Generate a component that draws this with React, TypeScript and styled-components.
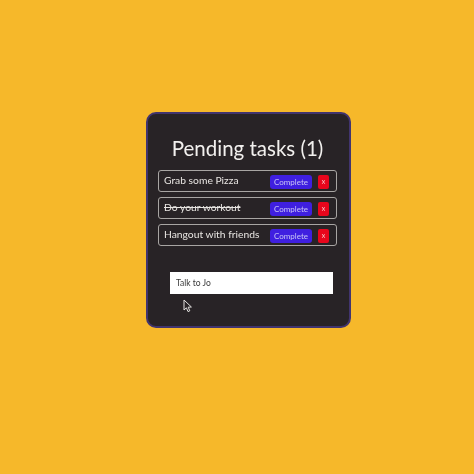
import React from 'react';
import styled, { createGlobalStyle } from 'styled-components';

const GlobalStyle = createGlobalStyle`
  html, body {
    margin: 0;
    height: 100%;
  }
  body {
    background: #f6b82a;
    font-family: "Open Sans", "Noto Sans", sans-serif;
  }
`;

const Page = styled.div`
  width: 474px;
  height: 474px;
  display: flex;
  align-items: flex-start;
  padding: 112px 0 0 146px;
  box-sizing: border-box;
`;

const Card = styled.div`
  position: relative;
  width: 205px;
  height: 216px;
  box-sizing: border-box;
  padding: 21px 12px 0 10px;
  background: #282326;
  border: 2px solid #41346e;
  border-radius: 10px;
  filter: blur(0.5px);
`;

const Title = styled.h1`
  margin: 0 0 9px 0;
  font-family: "Lato", sans-serif;
  font-size: 20.5px;
  line-height: 26px;
  font-weight: 400;
  color: #f2f0ee;
  text-align: center;
`;

const List = styled.div`
  display: flex;
  flex-direction: column;
  gap: 5px;
`;

const Row = styled.div`
  display: flex;
  align-items: center;
  height: 22px;
  box-sizing: border-box;
  padding: 0 7px 0 5px;
  border: 1px solid #a8a5a3;
  border-radius: 3px;
`;

const Label = styled.span<{ $done?: boolean }>`
  flex: 1;
  padding-bottom: 2px;
  font-family: "Lato", sans-serif;
  font-size: 10.3px;
  color: #e8e5e2;
  white-space: nowrap;
  text-decoration: ${(p) => (p.$done ? 'line-through' : 'none')};
`;

const CompleteButton = styled.button`
  width: 42px;
  height: 14px;
  padding: 0;
  margin: 1px 6px 0 0;
  border: 0;
  border-radius: 3px;
  background: #3f1fe0;
  color: #c9c6f5;
  font-family: "Lato", sans-serif;
  font-size: 8px;
  line-height: 14px;
`;

const RemoveButton = styled.button`
  width: 11px;
  height: 14px;
  padding: 0;
  margin-top: 1px;
  border: 0;
  border-radius: 2px;
  background: #e8061c;
  color: #f6c8c8;
  font-family: "Lato", sans-serif;
  font-size: 7px;
  line-height: 13px;
`;

const TaskInput = styled.input`
  display: block;
  width: 163px;
  height: 22px;
  box-sizing: border-box;
  margin: 26px 0 0 12px;
  padding: 0 6px;
  border: 0;
  border-radius: 0;
  background: #ffffff;
  color: #3a3a3a;
  font-family: "Lato", sans-serif;
  font-size: 8.5px;
  outline: none;
`;

const Pointer = styled.svg`
  position: absolute;
  left: 35px;
  top: 185px;
`;

const tasks = [
  { name: 'Grab some Pizza', done: false },
  { name: 'Do your workout', done: true },
  { name: 'Hangout with friends', done: false },
];

export default function App() {
  return (
    <Page>
      <GlobalStyle />
      <Card>
        <Title>Pending tasks (1)</Title>
        <List>
          {tasks.map((task) => (
            <Row key={task.name}>
              <Label $done={task.done}>{task.name}</Label>
              <CompleteButton>Complete</CompleteButton>
              <RemoveButton>x</RemoveButton>
            </Row>
          ))}
        </List>
        <TaskInput defaultValue="Talk to Jo" />
        <Pointer width="10" height="14" viewBox="0 0 10 14">
          <path d="M1 1 L1 11 L3.4 8.8 L5 12.6 L6.8 11.8 L5.2 8.2 L8.4 8 Z" fill="#282326" stroke="#e4e2e0" strokeWidth="1" strokeLinejoin="round" />
        </Pointer>
      </Card>
    </Page>
  );
}
